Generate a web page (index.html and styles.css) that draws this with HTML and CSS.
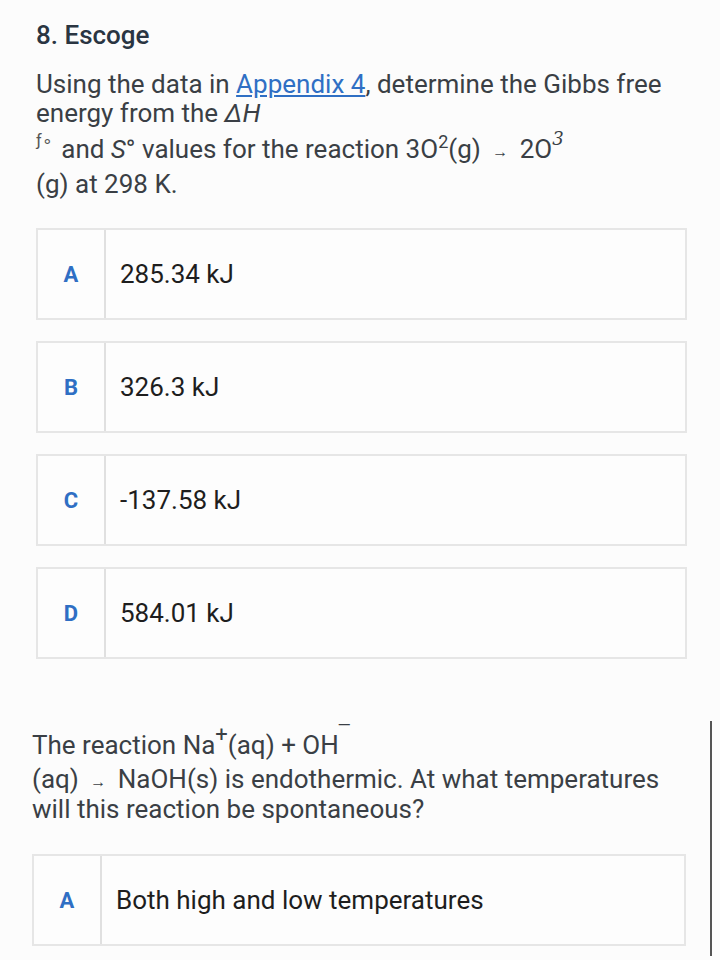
FILE: index.html
```html
<!DOCTYPE html>
<html>
    <head>
        <meta charset='utf-8'>
        <title>Escoge</title>
        <link rel="stylesheet" href="styles.css">
    </head>
    <body>
        <div class='question first-question'>
            <h2 class='q-title'>8. Escoge</h2>
            <div class='q-text'>
                <span class='line'>Using the data in <a href='#'>Appendix 4</a>, determine the Gibbs free energy from the <i>&Delta;H</i></span>
                <span class='line line-raised'><sup class='f-sign'>&fnof;&#8728;</sup> and <i>S</i>&deg; values for the reaction 3O<sup>2</sup>(g) <span class='arrow'>&rarr;</span> 2O<sup class='serif-sup'>3</sup></span>
                <span class='line line-after'>(g) at 298 K.</span>
            </div>
            <div class='options'>
                <div class='option'>
                    <div class='letter'>A</div>
                    <div class='answer'>285.34 kJ</div>
                </div>
                <div class='option'>
                    <div class='letter'>B</div>
                    <div class='answer'>326.3 kJ</div>
                </div>
                <div class='option'>
                    <div class='letter'>C</div>
                    <div class='answer'>-137.58 kJ</div>
                </div>
                <div class='option'>
                    <div class='letter'>D</div>
                    <div class='answer'>584.01 kJ</div>
                </div>
            </div>
        </div>
        <div class='question second-question'>
            <div class='q-text'>
                <span class='line'>The reaction Na<sup class='ion'>+</sup>(aq) + OH<sup class='ion'>&#8254;</sup></span>
                <span class='line line-wrap'>(aq) <span class='arrow'>&rarr;</span> NaOH(s) is endothermic. At what temperatures will this reaction be spontaneous?</span>
            </div>
            <div class='options'>
                <div class='option'>
                    <div class='letter'>A</div>
                    <div class='answer'>Both high and low temperatures</div>
                </div>
            </div>
        </div>
    </body>
</html>
```

FILE: styles.css
```css
*{
    box-sizing: border-box;
}
body{
    margin: 0;
    background-color: #fcfcfc;
    font-family: Roboto, "Noto Sans", sans-serif;
    color: #3a3f45;
}

.question{
    padding: 0 33px 0 36px;
}

.first-question{
    padding-top: 20px;
}

.q-title{
    margin: 0;
    font-size: 26px;
    font-weight: 500;
    line-height: 30px;
    color: #2a3542;
}

.q-text{
    margin-top: 20px;
    font-size: 26px;
    line-height: 29px;
}

.q-text .line{
    display: block;
}

.q-text .line-raised{
    margin-top: 7px;
}

.q-text .line-after{
    margin-top: 6px;
}

.q-text a{
    color: #2f6fc4;
}

.q-text sup{
    font-size: 18px;
    line-height: 0;
    vertical-align: 10px;
}

.q-text .serif-sup{
    font-family: "DejaVu Serif", serif;
    font-style: italic;
    vertical-align: 13px;
}

.q-text .f-sign{
    font-size: 17px;
    margin-right: 2px;
    color: #555;
    vertical-align: 12px;
}

.q-text .ion{
    font-size: 22px;
    vertical-align: 12px;
}

.arrow{
    font-size: 16px;
    line-height: 1;
    margin: 0 5px;
    vertical-align: 1px;
}

.options{
    margin-top: 29px;
    display: flex;
    flex-direction: column;
    gap: 21px;
}

.option{
    display: flex;
    height: 92px;
    border: 2px solid #e6e6e6;
    background-color: #fdfdfd;
}

.letter{
    width: 68px;
    display: flex;
    align-items: center;
    justify-content: center;
    border-right: 2px solid #e0e0e0;
    font-size: 22px;
    font-weight: 700;
    color: #2f6fc4;
}

.answer{
    display: flex;
    align-items: center;
    padding-left: 14px;
    font-size: 26px;
    color: #1e1e1e;
}

.second-question{
    margin: 62px 8px 0 0;
    padding: 10px 24px 10px 32px;
    border-right: 2px solid #555;
}

.second-question .q-text{
    margin-top: 0;
}

.second-question .line-wrap{
    margin-top: 4px;
    line-height: 30px;
}

.second-question .options{
    margin-top: 30px;
}
```
